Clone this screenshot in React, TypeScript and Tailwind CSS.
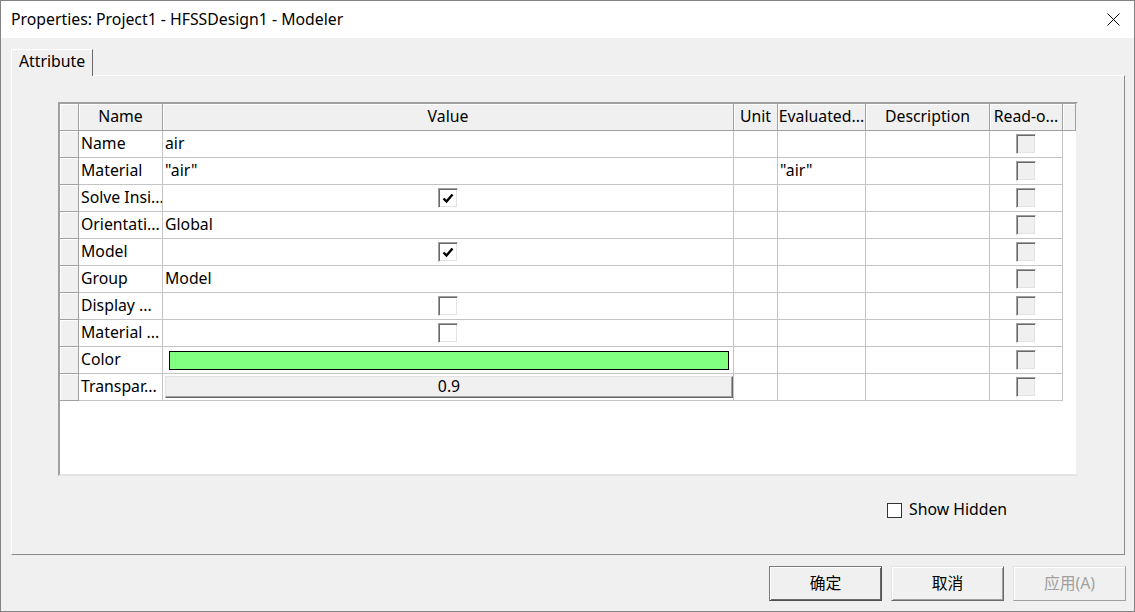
import React from "react";

const font = "font-['Noto_Sans','Noto_Sans_CJK_SC',sans-serif]";

const cols = [
  { key: "name", label: "Name", w: "w-[84px]" },
  { key: "value", label: "Value", w: "w-[571px]" },
  { key: "unit", label: "Unit", w: "w-[44px]" },
  { key: "eval", label: "Evaluated...", w: "w-[88px]" },
  { key: "desc", label: "Description", w: "w-[124px]" },
  { key: "ro", label: "Read-o...", w: "w-[73px]" },
];

type Row = {
  name: string;
  value?: string;
  check?: boolean;
  color?: boolean;
  button?: string;
  evaluated?: string;
};

const rows: Row[] = [
  { name: "Name", value: "air" },
  { name: "Material", value: '"air"', evaluated: '"air"' },
  { name: "Solve Insi...", check: true },
  { name: "Orientati...", value: "Global" },
  { name: "Model", check: true },
  { name: "Group", value: "Model" },
  { name: "Display ...", check: false },
  { name: "Material ...", check: false },
  { name: "Color", color: true },
  { name: "Transpar...", button: "0.9" },
];

const raised =
  "bg-[#f0f0f0] border-r border-b border-r-[#a0a0a0] border-b-[#a0a0a0] shadow-[inset_1px_1px_0_#ffffff]";

function CheckMark() {
  return (
    <svg width="12" height="11" viewBox="0 0 12 11">
      <path d="M1.5 5.5 L4.5 8.5 L10.5 1.5" stroke="#000" strokeWidth="2.4" fill="none" />
    </svg>
  );
}

function SunkenBox({ checked, gray }: { checked?: boolean; gray?: boolean }) {
  return (
    <div
      className={`w-[20px] h-[20px] flex items-center justify-center border border-t-[#a0a0a0] border-l-[#a0a0a0] border-r-white border-b-white shadow-[inset_1px_1px_0_#696969,inset_-1px_-1px_0_#e3e3e3] ${
        gray ? "bg-[#f0f0f0]" : "bg-white"
      }`}
    >
      {checked && <CheckMark />}
    </div>
  );
}

function PropertyGrid() {
  return (
    <div className="w-[1020px] h-[374px] bg-white flex flex-col border-2 border-t-[#a0a0a0] border-l-[#a0a0a0] border-r-[#f0f0f0] border-b-[#e3e3e3]">
      {/* header */}
      <div className="flex h-[27px] shrink-0">
        <div className={`w-[19px] ${raised}`}></div>
        {cols.map((c) => (
          <div key={c.key} className={`${c.w} ${raised} flex items-center justify-center px-[2px] pb-[1px] whitespace-nowrap overflow-hidden`}>
            {c.label}
          </div>
        ))}
        <div className={`w-[13px] ${raised}`}></div>
      </div>

      {rows.map((r) => (
        <div key={r.name} className="flex h-[27px] shrink-0">
          <div className={`w-[19px] ${raised}`}></div>
          <div className="w-[84px] border-r border-b border-[#c4c4c4] flex items-center pl-[2px] whitespace-nowrap overflow-hidden">
            {r.name}
          </div>
          <div className="w-[571px] border-r border-b border-[#c4c4c4] flex items-center">
            {r.value && <span className="pl-[2px]">{r.value}</span>}
            {r.check !== undefined && (
              <div className="flex-1 flex justify-center">
                <SunkenBox checked={r.check} />
              </div>
            )}
            {r.color && (
              <div className="flex-1 ml-[6px] mr-[4px] h-[19px] bg-[#80ff80] border border-black"></div>
            )}
            {r.button && (
              <div className="flex-1 ml-[2px] h-[22px] pb-[1px] bg-[#f0f0f0] flex items-center justify-center border border-t-[#e3e3e3] border-l-[#e3e3e3] border-r-[#696969] border-b-[#696969] shadow-[inset_-1px_-1px_0_#a0a0a0]">
                {r.button}
              </div>
            )}
          </div>
          <div className="w-[44px] border-r border-b border-[#c4c4c4]"></div>
          <div className="w-[88px] border-r border-b border-[#c4c4c4] flex items-center pl-[2px]">
            {r.evaluated}
          </div>
          <div className="w-[124px] border-r border-b border-[#c4c4c4]"></div>
          <div className="w-[73px] border-r border-b border-[#c4c4c4] flex items-center justify-center">
            <SunkenBox gray />
          </div>
        </div>
      ))}
      <div className="flex-1"></div>
    </div>
  );
}

function DialogButton({ label, disabled, isDefault }: { label: string; disabled?: boolean; isDefault?: boolean }) {
  let look =
    "text-black border-t-[#e3e3e3] border-l-[#e3e3e3] border-r-[#696969] border-b-[#696969] shadow-[inset_1px_1px_0_#ffffff,inset_-1px_-1px_0_#a0a0a0]";
  if (isDefault)
    look =
      "text-black border-t-[#7a7a7a] border-l-[#7a7a7a] border-r-[#505050] border-b-[#505050] shadow-[inset_1px_1px_0_#ffffff,inset_-1px_-1px_0_#696969]";
  if (disabled)
    look =
      "text-[#a0a0a0] border-t-[#e3e3e3] border-l-[#e3e3e3] border-r-[#a0a0a0] border-b-[#a0a0a0] shadow-[inset_1px_1px_0_#ffffff]";
  return (
    <button className={`w-[113px] h-[35px] bg-[#f0f0f0] flex items-center justify-center border ${look}`}>
      {label}
    </button>
  );
}

export default function App() {
  return (
    <div className={`w-[1135px] h-[612px] bg-[#f0f0f0] border border-[#838383] flex flex-col text-[15.8px] text-black ${font}`}>
      {/* title bar */}
      <div className="h-[37px] bg-white flex items-center justify-between pl-[10px] pr-[14px] shrink-0">
        <span>Properties: Project1 - HFSSDesign1 - Modeler</span>
        <svg width="13" height="13" viewBox="0 0 13 13">
          <path d="M0.5 0.5 L12.5 12.5 M12.5 0.5 L0.5 12.5" stroke="#000" strokeWidth="1" />
        </svg>
      </div>

      {/* body */}
      <div className="pl-[10px] pt-[11px] flex flex-col">
        <div className="flex">
          <div className="relative z-10 -mb-px h-[27px] w-[82px] bg-[#f0f0f0] flex items-center pl-[7px] pb-[3px] border-t border-l border-r border-t-white border-l-white border-r-[#696969]">
            Attribute
          </div>
        </div>
        <div className="w-[1114px] h-[480px] flex flex-col border border-t-white border-l-white border-r-[#8a8a8a] border-b-[#8a8a8a]">
          <div className="pl-[46px] pt-[26px]">
            <PropertyGrid />
          </div>
          <div className="flex items-center pl-[875px] pt-[22px]">
            <div className="w-[15px] h-[15px] bg-white border border-[#333333]"></div>
            <span className="ml-[7px] pb-[1px]">Show Hidden</span>
          </div>
        </div>
        <div className="flex justify-end gap-[9px] pr-[8px] pt-[11px]">
          <DialogButton label="确定" isDefault />
          <DialogButton label="取消" />
          <DialogButton label="应用(A)" disabled />
        </div>
      </div>
    </div>
  );
}
